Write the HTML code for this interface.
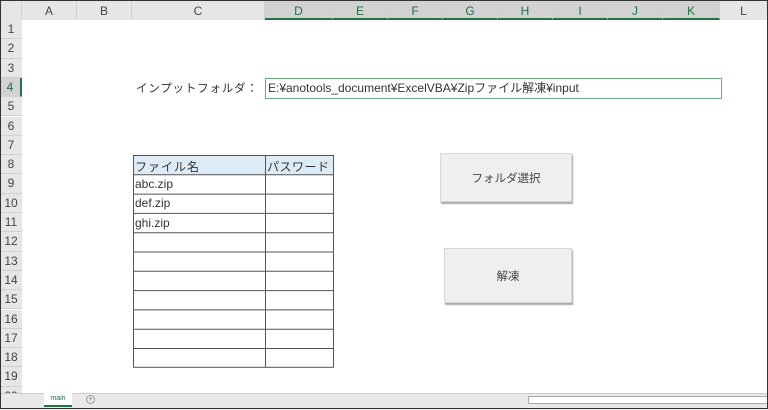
<!DOCTYPE html>
<html><head><meta charset="utf-8"><style>
body{margin:0;width:768px;height:409px;overflow:hidden;background:#fff;font-family:"Liberation Sans","Noto Sans CJK JP",sans-serif;position:relative}
.a{position:absolute}
.ch{position:absolute;top:0;height:20px;background:#e6e6e6;border-right:1px solid #d0d0d0;font-size:12px;color:#444;text-align:center;line-height:22px;box-sizing:border-box}
.ch.s{background:#d2d2d2;color:#217346;border-bottom:2px solid #217346}
.rh{position:absolute;left:0;width:22px;height:19.3px;background:#e6e6e6;border-bottom:1px solid #d0d0d0;font-size:12px;color:#444;text-align:center;line-height:19px;box-sizing:border-box}
.rh.s{background:#d2d2d2;color:#217346;border-right:2px solid #217346}
.t{font-size:12px;color:#333}
.btn{position:absolute;background:#efefef;border:1px solid #d8d8d8;box-shadow:1px 2px 1px #aaa;font-size:11.5px;color:#444;display:flex;align-items:center;justify-content:center}
</style></head><body>
<div class="ch" style="left:0;width:22px;background:#e6e6e6"></div>
<div class="ch" style="left:22px;width:55px">A</div>
<div class="ch" style="left:77px;width:55px">B</div>
<div class="ch" style="left:132px;width:133px">C</div>
<div class="ch s" style="left:265px;width:68px">D</div>
<div class="ch s" style="left:333px;width:55px">E</div>
<div class="ch s" style="left:388px;width:55px">F</div>
<div class="ch s" style="left:443px;width:55px">G</div>
<div class="ch s" style="left:498px;width:55px">H</div>
<div class="ch s" style="left:553px;width:55px">I</div>
<div class="ch s" style="left:608px;width:55px">J</div>
<div class="ch s" style="left:663px;width:57px">K</div>
<div class="ch" style="left:720px;width:48px">L</div>
<div class="rh" style="top:20px">1</div>
<div class="rh" style="top:39.3px">2</div>
<div class="rh" style="top:58.6px">3</div>
<div class="rh s" style="top:77.9px">4</div>
<div class="rh" style="top:97.2px">5</div>
<div class="rh" style="top:116.5px">6</div>
<div class="rh" style="top:135.8px">7</div>
<div class="rh" style="top:155.1px">8</div>
<div class="rh" style="top:174.4px">9</div>
<div class="rh" style="top:193.7px">10</div>
<div class="rh" style="top:213px">11</div>
<div class="rh" style="top:232.3px">12</div>
<div class="rh" style="top:251.6px">13</div>
<div class="rh" style="top:270.9px">14</div>
<div class="rh" style="top:290.2px">15</div>
<div class="rh" style="top:309.5px">16</div>
<div class="rh" style="top:328.8px">17</div>
<div class="rh" style="top:348.1px">18</div>
<div class="rh" style="top:367.4px">19</div>
<div class="rh" style="top:386.7px">20</div>

<div class="a" style="left:136px;top:80px;letter-spacing:0.8px;font-size:11.5px;color:#333">インプットフォルダ：</div>
<div class="a t" style="left:265px;top:78px;width:453px;height:19px;border:1.5px solid #6aa882;box-sizing:content-box;line-height:19px;padding-left:2px;font-size:12px">E:¥anotools_document¥ExcelVBA¥Zipファイル解凍¥input</div>

<svg class="a" style="left:0;top:0" width="768" height="409">
<rect x="133.5" y="155.5" width="200" height="19.3" fill="#ddebf7"/>
<g stroke="#555" stroke-width="1" fill="none">
<rect x="133.5" y="155.5" width="200" height="211.8"/>
<line x1="265.5" y1="155.5" x2="265.5" y2="367.3"/>
<line x1="133" y1="174.8" x2="334" y2="174.8"/>
<line x1="133" y1="194.1" x2="334" y2="194.1"/>
<line x1="133" y1="213.4" x2="334" y2="213.4"/>
<line x1="133" y1="232.7" x2="334" y2="232.7"/>
<line x1="133" y1="252" x2="334" y2="252"/>
<line x1="133" y1="271.3" x2="334" y2="271.3"/>
<line x1="133" y1="290.6" x2="334" y2="290.6"/>
<line x1="133" y1="309.9" x2="334" y2="309.9"/>
<line x1="133" y1="329.2" x2="334" y2="329.2"/>
<line x1="133" y1="348.5" x2="334" y2="348.5"/>
</g></svg>
<div class="a t" style="left:135px;top:158px;letter-spacing:1px">ファイル名</div>
<div class="a t" style="left:267px;top:158px;letter-spacing:0.5px">パスワード</div>
<div class="a t" style="left:135px;top:177px">abc.zip</div>
<div class="a t" style="left:135px;top:196px">def.zip</div>
<div class="a t" style="left:135px;top:216px">ghi.zip</div>

<div class="btn" style="left:440px;top:153px;width:130px;height:47px">フォルダ選択</div>
<div class="btn" style="left:444px;top:248px;width:126px;height:53px">解凍</div>

<div class="a" style="left:0;top:393px;width:768px;height:16px;background:#e9e9e9;border-top:1px solid #ccc"></div>
<div class="a" style="left:44px;top:393px;width:28px;height:12px;background:#fff;border-bottom:2px solid #217346;font-size:7px;color:#217346;text-align:center;line-height:12px">main</div>
<div class="a" style="left:86px;top:395px;width:7px;height:7px;border:1px solid #999;border-radius:50%;font-size:7px;line-height:7px;text-align:center;color:#777">+</div>
<div class="a" style="left:528px;top:396px;width:240px;height:6px;background:#fff;border:1px solid #aaa"></div>
<div class="a" style="left:0;top:0;width:766px;height:407px;border:1px solid #333"></div>
</body></html>
